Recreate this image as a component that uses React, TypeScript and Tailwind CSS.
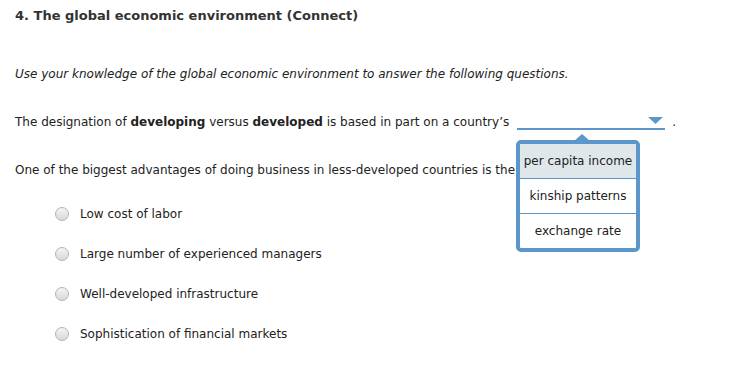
import React from "react";

function Radio({ label }: { label: string }) {
  return (
    <div className="flex items-center h-[16px]">
      <span className="ml-[40px] w-[14px] h-[14px] rounded-full border border-[#b5b5b5] bg-gradient-to-b from-[#f4f4f4] to-[#d8d8d8] shrink-0" />
      <span className="ml-[11px]">{label}</span>
    </div>
  );
}

export default function App() {
  return (
    <div
      className="relative w-[729px] h-[369px] bg-white text-[12px] text-[#222]"
      style={{ fontFamily: '"DejaVu Sans", Verdana, sans-serif' }}
    >
      <div className="pl-[15px] pt-[8px]">
        <div className="font-bold text-[13px] text-[#333] leading-[16px]">
          4. The global economic environment (Connect)
        </div>
        <div className="italic mt-[42px] leading-[16px]">
          Use your knowledge of the global economic environment to answer the following questions.
        </div>
        <div className="mt-[30px] flex items-end leading-[16px]">
          <span>
            The designation of <b>developing</b> versus <b>developed</b> is based in part on a country’s
          </span>
          <span className="relative ml-[8px] w-[148px] h-[18px] border-b-2 border-[#5b97cb]">
            <svg className="absolute right-[2px] top-[5px]" width="15" height="7" viewBox="0 0 15 7">
              <path d="M0 0 H15 L7.5 7 Z" fill="#5b97cb" />
            </svg>
          </span>
          <span className="ml-[7px]">.</span>
        </div>
        <div className="mt-[32px] leading-[16px]">
          One of the biggest advantages of doing business in less-developed countries is the
        </div>
        <div className="mt-[28px] flex flex-col gap-[24px]">
          <Radio label="Low cost of labor" />
          <Radio label="Large number of experienced managers" />
          <Radio label="Well-developed infrastructure" />
          <Radio label="Sophistication of financial markets" />
        </div>
      </div>

      <div className="absolute left-[516px] top-[140px] w-[124px] border-[4px] border-[#5b97cb] rounded-[5px] bg-white text-[#222] text-[12px] text-center">
        <svg className="absolute left-[54px] -top-[10px]" width="16" height="7" viewBox="0 0 16 7">
          <path d="M0 7 L8 0 L16 7 Z" fill="#5b97cb" />
        </svg>
        <div className="h-[35px] flex items-center justify-center bg-[#dfe7eb] border-b border-[#5b97cb]">
          per capita income
        </div>
        <div className="h-[35px] flex items-center justify-center border-b border-[#5b97cb]">
          kinship patterns
        </div>
        <div className="h-[34px] flex items-center justify-center">exchange rate</div>
      </div>
    </div>
  );
}
